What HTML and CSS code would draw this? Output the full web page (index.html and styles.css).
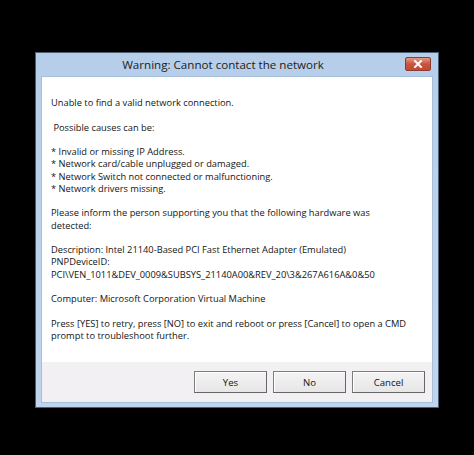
FILE: index.html
```html
<!DOCTYPE html>
<html>
<head>
<meta charset="utf-8">
<link rel="stylesheet" href="styles.css">
</head>
<body>
<div class="window">
  <div class="titlebar">
    <div class="title">Warning: Cannot contact the network</div>
    <div class="close">
      <svg width="10" height="8" viewBox="0 0 10 8"><path d="M2 1 L8 7 M8 1 L2 7" stroke="#fff" stroke-width="2" stroke-linecap="square"/></svg>
    </div>
  </div>
  <div class="client">
    <div class="message">Unable to find a valid network connection.

 Possible causes can be:

* Invalid or missing IP Address.
* Network card/cable unplugged or damaged.
* Network Switch not connected or malfunctioning.
* Network drivers missing.

Please inform the person supporting you that the following hardware was
detected:

Description: Intel 21140-Based PCI Fast Ethernet Adapter (Emulated)
PNPDeviceID:
PCI\VEN_1011&amp;DEV_0009&amp;SUBSYS_21140A00&amp;REV_20\3&amp;267A616A&amp;0&amp;50

Computer: Microsoft Corporation Virtual Machine

Press [YES] to retry, press [NO] to exit and reboot or press [Cancel] to open a CMD
prompt to troubleshoot further.</div>
    <div class="buttons">
      <button class="btn default">Yes</button>
      <button class="btn">No</button>
      <button class="btn">Cancel</button>
    </div>
  </div>
</div>
</body>
</html>
```
FILE: styles.css
```css
html, body {
  margin: 0;
  padding: 0;
  background: #000;
}
body {
  padding: 52px 0 0 35px;
  height: 455px;
  box-sizing: border-box;
}
.window {
  width: 404px;
  height: 356px;
  box-sizing: border-box;
  border: 1px solid #4d5f73;
  background: linear-gradient(#b6cee9, #c0d5ed);
  display: flex;
  flex-direction: column;
  padding: 0 5px 4px 5px;
}
.titlebar {
  height: 23px;
  display: flex;
  align-items: center;
}
.title {
  flex: 1;
  text-align: center;
  font-family: "Open Sans", "Noto Sans", sans-serif;
  font-size: 11.6px;
  color: #1c1c1c;
  padding-bottom: 1px;
}
.close {
  width: 26px;
  height: 14px;
  box-sizing: border-box;
  margin-right: 2px;
  margin-bottom: 1px;
  border: 1px solid #8a3c30;
  border-radius: 2px;
  background: linear-gradient(#e29a86, #c9553f 50%, #c24a34);
  display: flex;
  align-items: center;
  justify-content: center;
}
.close svg { display: block; }
.client {
  flex: 1;
  display: flex;
  flex-direction: column;
  background: #fff;
  border: 1px solid #a8bfd9;
}
.message {
  flex: 1;
  white-space: pre;
  font-family: "Open Sans", "Noto Sans", sans-serif;
  font-size: 9.3px;
  line-height: 12.26px;
  color: #141414;
  padding: 20px 0 0 9px;
}
.buttons {
  height: 40px;
  box-sizing: border-box;
  background: #f2f0f2;
  display: flex;
  justify-content: flex-end;
  gap: 6px;
  padding: 9px 7px 0 0;
}
.btn {
  width: 73px;
  height: 22px;
  box-sizing: border-box;
  border: 1px solid #7d7d7d;
  border-right-color: #666;
  border-bottom-color: #666;
  background: linear-gradient(#f4f4f4, #e6e6e6);
  box-shadow: inset 1px 1px 0 #fff;
  font-family: "Open Sans", "Noto Sans", sans-serif;
  font-size: 9.6px;
  color: #141414;
  padding: 0;
  margin: 0;
}
```
